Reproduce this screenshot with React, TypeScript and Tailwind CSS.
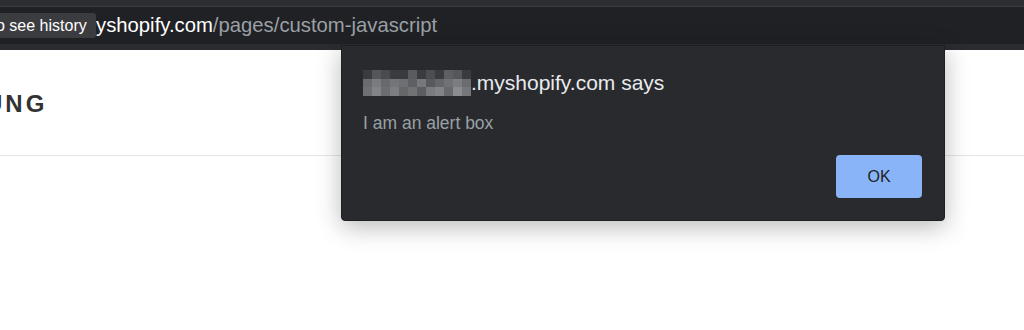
import React from 'react';

const font = { fontFamily: '"Liberation Sans", Arial, sans-serif' };

const mosaic = [
  ['bg-[#3a3b3e]', 'bg-[#55565a]', 'bg-[#4a4b4e]', 'bg-[#3a3b3e]', 'bg-[#3a3b3e]', 'bg-[#5a5b5e]', 'bg-[#3a3b3e]', 'bg-[#4d4e51]', 'bg-[#3a3b3e]', 'bg-[#5e5f62]', 'bg-[#56575a]', 'bg-[#3a3b3e]'],
  ['bg-[#6a6b6e]', 'bg-[#7a7b7e]', 'bg-[#68696c]', 'bg-[#74757a]', 'bg-[#6e6f72]', 'bg-[#5f6063]', 'bg-[#77787b]', 'bg-[#58595c]', 'bg-[#65666a]', 'bg-[#707174]', 'bg-[#7c7d80]', 'bg-[#6b6c6f]'],
  ['bg-[#6f7073]', 'bg-[#838487]', 'bg-[#6c6d70]', 'bg-[#7d7e81]', 'bg-[#666769]', 'bg-[#717275]', 'bg-[#5c5d60]', 'bg-[#7a7b7e]', 'bg-[#828386]', 'bg-[#68696c]', 'bg-[#8b8c8f]', 'bg-[#76777a]'],
];

export default function App() {
  return (
    <div className="relative w-[1024px] h-[330px] overflow-hidden bg-white" style={font}>
      {/* Browser chrome */}
      <div className="h-[7px] bg-[#2d2e31] border-b border-[#3a3b3e]" />
      <div className="h-[37px] bg-[#202124] flex items-center">
        <div className="h-[25px] w-[96px] shrink-0 bg-[#3b3c3f] rounded-r-[3px] flex items-center overflow-hidden">
          <span className="text-[16px] text-white whitespace-nowrap -ml-[4px]">o see history</span>
        </div>
        <div className="text-[20.3px] whitespace-nowrap leading-none">
          <span className="text-white">yshopify.com</span>
          <span className="text-[#9aa0a6]">/pages/custom-javascript</span>
        </div>
      </div>
      <div className="h-[6px] bg-[#2b2c2f]" />

      {/* Page */}
      <div className="h-[106px] border-b border-[#e6e6e6] flex items-center">
        <span className="text-[24px] font-bold tracking-[3px] text-[#333] -ml-[15px] mt-[2px]">UNG</span>
      </div>

      {/* Alert dialog */}
      <div className="absolute left-[341px] top-[45px] w-[604px] h-[176px] bg-[#292a2d] rounded-b-[4px] border border-[#1e1f22] shadow-[0_6px_24px_rgba(0,0,0,0.28)] px-[21px]">
        <div className="flex items-center mt-[24px] h-[26px]">
          <div className="flex flex-col w-[108px] h-[26px]">
            {mosaic.map((row, i) => (
              <div key={i} className="flex flex-1">
                {row.map((c, j) => (
                  <div key={j} className={`flex-1 ${c}`} />
                ))}
              </div>
            ))}
          </div>
          <span className="text-[21px] text-[#e8eaed] whitespace-nowrap">.myshopify.com says</span>
        </div>
        <div className="mt-[14px] text-[17.5px] text-[#9aa0a6]">I am an alert box</div>
        <div className="flex justify-end mt-[19px] pr-[1px]">
          <button className="w-[86px] h-[43px] rounded-[4px] bg-[#8ab4f8] text-[#202124] text-[16px] font-medium">
            OK
          </button>
        </div>
      </div>
    </div>
  );
}
